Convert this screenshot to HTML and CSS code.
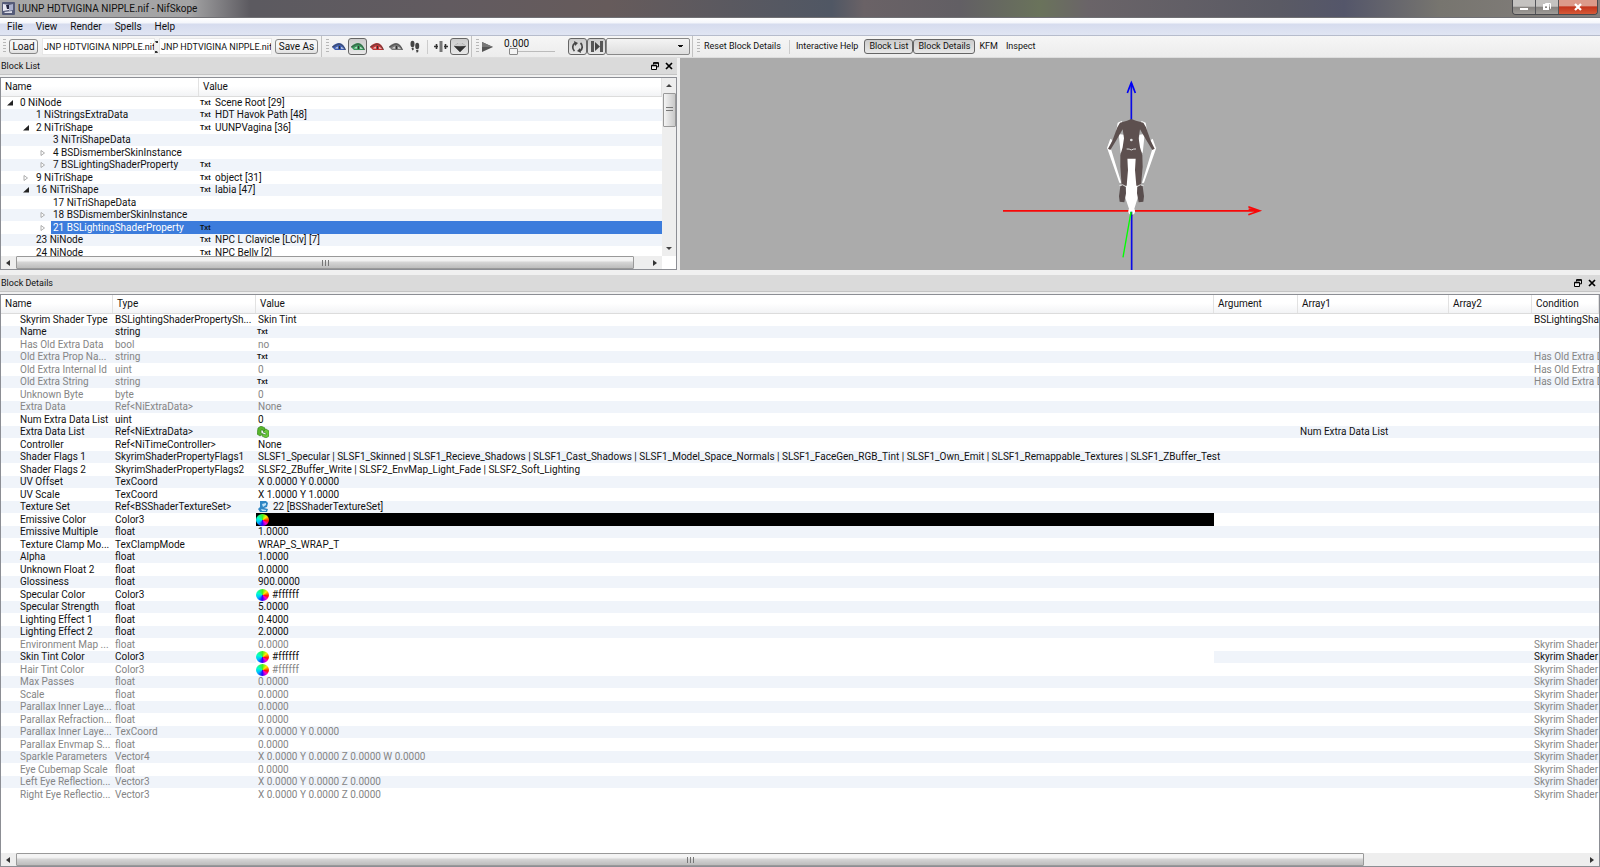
FILE: index.html
```
<!DOCTYPE html>
<html lang="en">
<head>
<meta charset="utf-8">
<title>UUNP HDTVIGINA NIPPLE.nif - NifSkope</title>
<link rel="stylesheet" href="styles.css">
</head>
<body>
<svg class="symbols" aria-hidden="true">
  <symbol id="eye" viewBox="0 0 14 8"><path d="M0 4C2 1 5 0 7 0c3 0 6 3 6.500 7H3z" fill="currentColor"/><path d="M3 5.500C5 2.500 9 2 12 6z" fill="#fff" opacity=".65"/><path d="M0 4c3-1 5-3 7-3s5 2 6.500 6" fill="none" stroke="#444" stroke-width=".8"/><path d="M6 2.500h3V7H6z" fill="currentColor"/><path d="M7 3h1v3H7z" fill="#333"/></symbol>
  <symbol id="float" viewBox="0 0 8 8"><path d="M2.500 2.500V.8h5v4H6" fill="none" stroke="#000" stroke-width="1"/><path d="M2.500 1h5" stroke="#000" stroke-width="1.600"/><path d="M.5 3.500h5v4h-5z" fill="#eee" stroke="#000"/><path d="M.5 3.500h5" stroke="#000" stroke-width="1.600"/></symbol>
  <symbol id="cross" viewBox="0 0 8 8"><path d="M1 1l6 6M7 1L1 7" stroke="#000" stroke-width="1.700"/></symbol>
  <symbol id="left" viewBox="0 0 4 6"><path d="M4 0v6L0 3z" fill="#333"/></symbol>
  <symbol id="right" viewBox="0 0 4 6"><path d="M0 0v6l4-3z" fill="#333"/></symbol>
  <symbol id="open" viewBox="0 0 6 6"><path d="M6 0v5.500H0z" fill="#222"/></symbol>
  <symbol id="closed" viewBox="0 0 6 6"><path d="M1 .5v5L4.500 3z" fill="#fff" stroke="#999" stroke-width=".8"/></symbol>
</svg>

<header class="titlebar">
  <svg class="appicon" viewBox="0 0 13 13"><rect width="13" height="13" rx="1" fill="#555b78"/><path d="M1 2l6 1v5L1 9z" fill="#e8e8f2"/><path d="M4 3h4v4H5z" fill="#242640"/><path d="M7 3l4-1v6l-4 1z" fill="#aab0cc"/><path d="M2 10l8-1v2H3z" fill="#dcdce8"/></svg>
  <h1 class="title">UUNP HDTVIGINA NIPPLE.nif - NifSkope</h1>
  <div class="winbuttons">
    <button class="win" aria-label="Minimize"><svg width="10" height="8" viewBox="0 0 10 8"><path d="M1 5h8v2H1z" fill="#fff"/></svg></button>
    <button class="win" aria-label="Restore"><svg width="10" height="8" viewBox="0 0 10 8"><path d="M3.500 1V.5h5v5H8" fill="none" stroke="#fff"/><path d="M2 2h4v4H2z" fill="none" stroke="#fff" stroke-width="2"/></svg></button>
    <button class="win win-close" aria-label="Close"><svg width="10" height="8" viewBox="0 0 10 8"><path d="M2 1l6 6M8 1L2 7" stroke="#fff" stroke-width="2.200"/></svg></button>
  </div>
</header>

<nav class="menubar">
  <button>File</button><button>View</button><button>Render</button><button>Spells</button><button>Help</button>
</nav>

<div class="toolbars">
  <div class="toolbar file-tools">
    <i class="grip"></i>
    <button class="push">Load</button>
    <input class="path" aria-label="Load file" value="JNP HDTVIGINA NIPPLE.nif">
    <svg class="swap" width="4" height="14" viewBox="0 0 4 14"><path d="M0 1h3v2H1zM0 11h2l1 2H0z" fill="#333"/></svg>
    <input class="path" aria-label="Save file" value="JNP HDTVIGINA NIPPLE.nif">
    <button class="push save">Save As</button>
  </div>
  <div class="toolbar view-tools">
    <i class="grip"></i>
    <button class="tool blue" aria-label="View top"><svg width="14" height="8"><use href="#eye"/></svg></button>
    <button class="tool green on" aria-label="View front"><svg width="14" height="8"><use href="#eye"/></svg></button>
    <button class="tool red" aria-label="View side"><svg width="14" height="8"><use href="#eye"/></svg></button>
    <button class="tool gray" aria-label="View user"><svg width="14" height="8"><use href="#eye"/></svg></button>
    <button class="tool" aria-label="Walk"><svg width="10" height="13" viewBox="0 0 10 13"><ellipse cx="2.500" cy="4" rx="2" ry="3.200" fill="#444"/><path d="M1.500 8l2-.4.3 2-1.500.8z" fill="#444"/><ellipse cx="7.200" cy="6" rx="2" ry="3.200" fill="#444"/><path d="M6 10l2.400-.3-.2 2.300-1.500.8z" fill="#444"/></svg></button>
    <i class="sep"></i>
    <button class="tool" aria-label="Flip"><svg width="14" height="11" viewBox="0 0 14 11"><path d="M5.500 0h3v11h-3z" fill="#777"/><path d="M0 5.500h4M10 5.500h4M2.500 3v5M11.500 3v5" stroke="#333" stroke-width="1.600"/></svg></button>
    <button class="tool on" aria-label="Perspective"><svg width="14" height="10" viewBox="0 0 14 10"><path d="M1 4l4-3h4l4 3-6 6z" fill="#555"/><path d="M1 4l4-3h4l4 3z" fill="#ccc"/><path d="M1 4l6 1 6-1-6 6z" fill="#333"/></svg></button>
  </div>
  <div class="toolbar anim-tools">
    <i class="grip"></i>
    <button class="tool play" aria-label="Play"><svg width="12" height="12" viewBox="0 0 12 12"><path d="M1 1l11 5L1 11z" fill="#555"/><path d="M1 1l11 5H1z" fill="#777"/></svg></button>
    <label class="time"><span>0.000</span><input type="range" min="0" max="100" value="0"></label>
    <button class="tool on" aria-label="Loop"><svg width="13" height="12" viewBox="0 0 13 12"><path d="M3.500 10A5 5 0 0 1 4 2M9.500 2a5 5 0 0 1-.5 8" fill="none" stroke="#444" stroke-width="1.700"/><path d="M3 0l4 2-3 3zM10 12l-4-2 3-3z" fill="#444"/></svg></button>
    <button class="tool on" aria-label="Switch animation"><svg width="12" height="11" viewBox="0 0 12 11"><path d="M0 0h3v11H0zM9 0h3v11H9z" fill="#555"/><path d="M4 1l5 4.500L4 10z" fill="#444"/></svg></button>
    <select class="anim" aria-label="Animation"><option></option></select>
  </div>
  <div class="toolbar window-tools">
    <i class="grip"></i>
    <button class="text">Reset Block Details</button>
    <i class="sep"></i>
    <button class="text">Interactive Help</button>
    <div class="toggles"><button class="text on">Block List</button><button class="text on">Block Details</button></div>
    <button class="text">KFM</button>
    <button class="text">Inspect</button>
  </div>
</div>

<div class="upper">
  <section class="dock">
    <div class="dock-title"><h2>Block List</h2><button aria-label="Float block list"><svg width="8" height="8"><use href="#float"/></svg></button><button aria-label="Close block list"><svg width="8" height="8"><use href="#cross"/></svg></button></div>
    <div class="frame tree-frame">
      <div class="tree-main">
        <div class="tree-area">
          <table class="grid tree">
            <colgroup><col class="c-tree"><col></colgroup>
            <thead><tr><th>Name</th><th>Value</th></tr></thead>
            <tbody>
              <tr><td class="l0"><svg><use href="#open"/></svg><span>0 NiNode</span></td><td><b>Txt</b>Scene Root [29]</td></tr>
              <tr><td class="l1"><span>1 NiStringsExtraData</span></td><td><b>Txt</b>HDT Havok Path [48]</td></tr>
              <tr><td class="l1"><svg><use href="#open"/></svg><span>2 NiTriShape</span></td><td><b>Txt</b>UUNPVagina [36]</td></tr>
              <tr><td class="l2"><span>3 NiTriShapeData</span></td><td></td></tr>
              <tr><td class="l2"><svg><use href="#closed"/></svg><span>4 BSDismemberSkinInstance</span></td><td></td></tr>
              <tr><td class="l2"><svg><use href="#closed"/></svg><span>7 BSLightingShaderProperty</span></td><td><b>Txt</b></td></tr>
              <tr><td class="l1"><svg><use href="#closed"/></svg><span>9 NiTriShape</span></td><td><b>Txt</b>object [31]</td></tr>
              <tr><td class="l1"><svg><use href="#open"/></svg><span>16 NiTriShape</span></td><td><b>Txt</b>labia [47]</td></tr>
              <tr><td class="l2"><span>17 NiTriShapeData</span></td><td></td></tr>
              <tr><td class="l2"><svg><use href="#closed"/></svg><span>18 BSDismemberSkinInstance</span></td><td></td></tr>
              <tr class="selected"><td class="l2"><svg><use href="#closed"/></svg><span>21 BSLightingShaderProperty</span></td><td><b>Txt</b></td></tr>
              <tr><td class="l1"><span>23 NiNode</span></td><td><b>Txt</b>NPC L Clavicle [LClv] [7]</td></tr>
              <tr><td class="l1"><span>24 NiNode</span></td><td><b>Txt</b>NPC Belly [2]</td></tr>
            </tbody>
          </table>
        </div>
        <div class="vscroll"><i class="up"></i><div class="vthumb"><i class="ticks"></i></div><i class="down"></i></div>
      </div>
      <div class="hscroll tree-scroll"><svg width="4" height="6"><use href="#left"/></svg><div class="track"><div class="thumb"><i class="ticks"></i></div></div><svg width="4" height="6"><use href="#right"/></svg></div>
    </div>
  </section>
  <main class="viewport">
    <svg viewBox="0 0 920 213" preserveAspectRatio="xMidYMin slice" aria-label="Model view">
      <g transform="translate(300 12) scale(.33333)">
        <path d="M454 150V40M455 425V606" stroke="#0a0ae6" stroke-width="5" fill="none"/>
        <path d="M442 69q6-16 12-31 6 15 12 31" fill="none" stroke="#0000f5" stroke-width="5"/>
        <path d="M69 422.500H838M805 410l34 12.500-34 12M806 417l28 6" stroke="#f80808" stroke-width="5" fill="none"/>
        <path d="M413 158l12-5 6 10-14 26-10 4zM497 158l-12-5-6 10 14 26 10 4zM381 233l12 4 31 102-6-1zM529 233l-12 4-31 102 6-1zM416 192l16 2 4 40-14 16zM494 192l-16 2-4 40 14 16zM442 264h26l4 80 2 37-12 38h-14l-13-38 4-37z" fill="#fff"/>
        <path d="M381 234l10-28 6 4-7 28zM528 234l-10-28-6 4 7 28z" fill="#fff"/>
        <path d="M441 152L454 147 468 152 490 158 498 172 512 212 524 236 517 240 500 212 480 178 476 205 480 232 487 256 488 290 483 347 469 347 465 300 467 266 442 266 444 300 440 347 425 347 421 290 421 256 428 232 432 205 428 178 408 212 391 240 384 236 397 212 412 172 420 158z" fill="#5d504f"/>
        <path d="M421 349l7-4 9 4 1 21-5 27-14-2-2-16zM488 349l-7-4-9 4-1 21 5 27 14-2 2-16z" fill="#594e4e"/>
        <path d="M418 347q10-7 20 3M471 350q10-10 20-3M440 237q8-1 14 3 7-4 14-3" fill="none" stroke="#ddd" stroke-width="3"/>
        <circle cx="454" cy="210" r="4" fill="#ddd"/>
        <circle cx="455" cy="424" r="10" fill="#fff"/>
        <path d="M454 425v12" stroke="#0a4a70" stroke-width="6"/>
        <path d="M453 426l-24 136" stroke="#0f0" stroke-width="4"/>
      </g>
    </svg>
  </main>
</div>

<section class="dock details-dock">
  <div class="dock-title"><h2>Block Details</h2><button aria-label="Float block details"><svg width="8" height="8"><use href="#float"/></svg></button><button aria-label="Close block details"><svg width="8" height="8"><use href="#cross"/></svg></button></div>
  <div class="frame">
    <div class="details-area">
      <table class="grid details">
        <colgroup><col class="c-name"><col class="c-type"><col><col class="c-arg"><col class="c-arr1"><col class="c-arr2"><col class="c-cond"></colgroup>
        <thead><tr><th>Name</th><th>Type</th><th>Value</th><th>Argument</th><th>Array1</th><th>Array2</th><th>Condition</th></tr></thead>
        <tbody>
          <tr><td>Skyrim Shader Type</td><td>BSLightingShaderPropertySh...</td><td>Skin Tint</td><td></td><td></td><td></td><td>BSLightingSha</td></tr>
          <tr><td>Name</td><td>string</td><td><b>Txt</b></td><td></td><td></td><td></td><td></td></tr>
          <tr class="off"><td>Has Old Extra Data</td><td>bool</td><td>no</td><td></td><td></td><td></td><td></td></tr>
          <tr class="off"><td>Old Extra Prop Na...</td><td>string</td><td><b>Txt</b></td><td></td><td></td><td></td><td>Has Old Extra D</td></tr>
          <tr class="off"><td>Old Extra Internal Id</td><td>uint</td><td>0</td><td></td><td></td><td></td><td>Has Old Extra D</td></tr>
          <tr class="off"><td>Old Extra String</td><td>string</td><td><b>Txt</b></td><td></td><td></td><td></td><td>Has Old Extra D</td></tr>
          <tr class="off"><td>Unknown Byte</td><td>byte</td><td>0</td><td></td><td></td><td></td><td></td></tr>
          <tr class="off"><td>Extra Data</td><td>Ref&lt;NiExtraData&gt;</td><td>None</td><td></td><td></td><td></td><td></td></tr>
          <tr><td>Num Extra Data List</td><td>uint</td><td>0</td><td></td><td></td><td></td><td></td></tr>
          <tr><td>Extra Data List</td><td>Ref&lt;NiExtraData&gt;</td><td><svg class="ico" viewBox="0 0 12 12"><path d="M1 2l3-2 4 2v3H6V4H4v3l2 1-3 2-3-2z" fill="#58b52c" stroke="#2f7d1c" stroke-width=".6"/><path d="M6 6l3-3 3 2v5l-3 2-4-2 1-2 3 1V7z" fill="#6cc83c" stroke="#2f7d1c" stroke-width=".6"/></svg></td><td></td><td>Num Extra Data List</td><td></td><td></td></tr>
          <tr><td>Controller</td><td>Ref&lt;NiTimeController&gt;</td><td>None</td><td></td><td></td><td></td><td></td></tr>
          <tr><td>Shader Flags 1</td><td>SkyrimShaderPropertyFlags1</td><td>SLSF1_Specular | SLSF1_Skinned | SLSF1_Recieve_Shadows | SLSF1_Cast_Shadows | SLSF1_Model_Space_Normals | SLSF1_FaceGen_RGB_Tint | SLSF1_Own_Emit | SLSF1_Remappable_Textures | SLSF1_ZBuffer_Test</td><td></td><td></td><td></td><td></td></tr>
          <tr><td>Shader Flags 2</td><td>SkyrimShaderPropertyFlags2</td><td>SLSF2_ZBuffer_Write | SLSF2_EnvMap_Light_Fade | SLSF2_Soft_Lighting</td><td></td><td></td><td></td><td></td></tr>
          <tr><td>UV Offset</td><td>TexCoord</td><td>X 0.0000 Y 0.0000</td><td></td><td></td><td></td><td></td></tr>
          <tr><td>UV Scale</td><td>TexCoord</td><td>X 1.0000 Y 1.0000</td><td></td><td></td><td></td><td></td></tr>
          <tr><td>Texture Set</td><td>Ref&lt;BSShaderTextureSet&gt;</td><td><svg class="ico" viewBox="0 0 12 12"><path d="M3 0h6l2 2-1 4-3 1 4 1-1 3H3L1 8l2-2z" fill="#2f86c4"/><path d="M5 3l4-1v2L6 6zM4 8l5 1v1H5z" fill="#bfe2f7"/></svg>22 [BSShaderTextureSet]</td><td></td><td></td><td></td><td></td></tr>
          <tr><td>Emissive Color</td><td>Color3</td><td class="black"><i class="wheel"></i></td><td></td><td></td><td></td><td></td></tr>
          <tr><td>Emissive Multiple</td><td>float</td><td>1.0000</td><td></td><td></td><td></td><td></td></tr>
          <tr><td>Texture Clamp Mo...</td><td>TexClampMode</td><td>WRAP_S_WRAP_T</td><td></td><td></td><td></td><td></td></tr>
          <tr><td>Alpha</td><td>float</td><td>1.0000</td><td></td><td></td><td></td><td></td></tr>
          <tr><td>Unknown Float 2</td><td>float</td><td>0.0000</td><td></td><td></td><td></td><td></td></tr>
          <tr><td>Glossiness</td><td>float</td><td>900.0000</td><td></td><td></td><td></td><td></td></tr>
          <tr><td>Specular Color</td><td>Color3</td><td><i class="wheel"></i>#ffffff</td><td></td><td></td><td></td><td></td></tr>
          <tr><td>Specular Strength</td><td>float</td><td>5.0000</td><td></td><td></td><td></td><td></td></tr>
          <tr><td>Lighting Effect 1</td><td>float</td><td>0.4000</td><td></td><td></td><td></td><td></td></tr>
          <tr><td>Lighting Effect 2</td><td>float</td><td>2.0000</td><td></td><td></td><td></td><td></td></tr>
          <tr class="off"><td>Environment Map ...</td><td>float</td><td>0.0000</td><td></td><td></td><td></td><td>Skyrim Shader</td></tr>
          <tr><td>Skin Tint Color</td><td>Color3</td><td class="white"><i class="wheel"></i>#ffffff</td><td></td><td></td><td></td><td>Skyrim Shader</td></tr>
          <tr class="off"><td>Hair Tint Color</td><td>Color3</td><td><i class="wheel"></i>#ffffff</td><td></td><td></td><td></td><td>Skyrim Shader</td></tr>
          <tr class="off"><td>Max Passes</td><td>float</td><td>0.0000</td><td></td><td></td><td></td><td>Skyrim Shader</td></tr>
          <tr class="off"><td>Scale</td><td>float</td><td>0.0000</td><td></td><td></td><td></td><td>Skyrim Shader</td></tr>
          <tr class="off"><td>Parallax Inner Laye...</td><td>float</td><td>0.0000</td><td></td><td></td><td></td><td>Skyrim Shader</td></tr>
          <tr class="off"><td>Parallax Refraction...</td><td>float</td><td>0.0000</td><td></td><td></td><td></td><td>Skyrim Shader</td></tr>
          <tr class="off"><td>Parallax Inner Laye...</td><td>TexCoord</td><td>X 0.0000 Y 0.0000</td><td></td><td></td><td></td><td>Skyrim Shader</td></tr>
          <tr class="off"><td>Parallax Envmap S...</td><td>float</td><td>0.0000</td><td></td><td></td><td></td><td>Skyrim Shader</td></tr>
          <tr class="off"><td>Sparkle Parameters</td><td>Vector4</td><td>X 0.0000 Y 0.0000 Z 0.0000 W 0.0000</td><td></td><td></td><td></td><td>Skyrim Shader</td></tr>
          <tr class="off"><td>Eye Cubemap Scale</td><td>float</td><td>0.0000</td><td></td><td></td><td></td><td>Skyrim Shader</td></tr>
          <tr class="off"><td>Left Eye Reflection...</td><td>Vector3</td><td>X 0.0000 Y 0.0000 Z 0.0000</td><td></td><td></td><td></td><td>Skyrim Shader</td></tr>
          <tr class="off"><td>Right Eye Reflectio...</td><td>Vector3</td><td>X 0.0000 Y 0.0000 Z 0.0000</td><td></td><td></td><td></td><td>Skyrim Shader</td></tr>
        </tbody>
      </table>
    </div>
    <div class="hscroll details-scroll"><svg width="4" height="6"><use href="#left"/></svg><div class="track"><div class="thumb"><i class="ticks"></i></div></div><svg width="4" height="6"><use href="#right"/></svg></div>
  </div>
</section>
</body>
</html>
```
FILE: styles.css
```
* { box-sizing: border-box; }
body {
  margin: 0;
  min-height: 100vh;
  display: flex;
  flex-direction: column;
  background: #f0f0f0;
  color: #111;
  font: 10px/12px Roboto, "Open Sans", sans-serif;
}
button, input, select { font: inherit; color: inherit; margin: 0; padding: 0; border: 0; background: none; }
h1, h2 { margin: 0; font: inherit; }
svg { flex: none; }
.symbols { position: absolute; width: 0; height: 0; }

.titlebar {
  display: flex;
  align-items: center;
  height: 18px;
  padding-left: 2px;
  gap: 3px;
  border-bottom: 1px solid #707074;
  background:
    linear-gradient(90deg, #a8a8a8 0, #a3a3a4 190px, transparent 250px),
    linear-gradient(90deg, #5c5a60 16%, #625b60 28%, #665b5b 38%, #505764 52%, #6a6266 54%, #625f64 60%, #6a735b 65%, #6a6468 68%, #5a5a64 80%, #54566a 84%, #77756f 90%, #85807e 100%);
}
.appicon { width: 13px; height: 13px; }
.title { color: #111; flex: 1; }
.winbuttons { display: flex; align-self: flex-start; margin-right: 2px; height: 15px; border: 1px solid #4a4a4e; border-top: 0; border-radius: 0 0 4px 4px; overflow: hidden; }
.win { width: 23px; display: flex; align-items: center; justify-content: center; border-right: 1px solid #55565a; background: linear-gradient(#c4c2c0 45%, #85827f 50%, #a09c98); }
.win-close { width: 38px; border-right: 0; background: linear-gradient(#dc9a8a 40%, #c4341c 50%, #d65a38); }

.menubar {
  display: flex;
  gap: 13px;
  height: 18px;
  padding-left: 7px;
  border-bottom: 1px solid #b6bccc;
  background: linear-gradient(#fff 0, #f4f6fb 5px, #d6dcee 6px, #e0e5f3);
}

.toolbars { display: flex; height: 22px; background: linear-gradient(#f6f6f6, #ececec); border-bottom: 1px solid #ddd; }
.toolbar { display: flex; align-items: center; padding-left: 4px; border-right: 1px solid #c2c2c2; }
.grip { width: 3px; height: 15px; flex: none; background: repeating-linear-gradient(#b8b8b8 0 1px, transparent 1px 3px); }
.sep { width: 1px; height: 14px; background: #ccc; }
.file-tools { width: 322px; padding-left: 3px; }
.view-tools { width: 150px; }
.anim-tools { width: 221px; }
.window-tools { flex: 1; border-right: 0; font-size: 9px; }
.push { height: 15px; width: 29px; margin: 0 4px 0 3px; border: 1px solid #888; border-radius: 3px; background: linear-gradient(#f6f6f6 50%, #e0e0e0); line-height: 12px; flex: none; }
.push.save { width: 43px; margin: 0 0 0 3px; }
.path { height: 17px; width: 113px; padding-left: 1px; border: 1px solid #e6e6e6; background: #fff; font-size: 9px; }
.swap { margin: 0; }
.tool { width: 19px; height: 17px; display: flex; align-items: center; justify-content: center; flex: none; }
.on { border: 1px solid #666; border-radius: 3px; background: linear-gradient(#ccc, #e8e8e8); }
.blue { color: #3d5cae; }
.green { color: #36975a; }
.red { color: #c03434; }
.gray { color: #777; }
.view-tools .sep { margin: 0 3px; }
.play { width: 15px; }
.time { display: flex; flex-direction: column; width: 74px; padding-left: 10px; line-height: 9px; }
.time input { -webkit-appearance: none; appearance: none; width: 46px; height: 7px; margin-left: 5px; background: linear-gradient(#bbb, #bbb) 0 3px / 100% 1px no-repeat; }
.time input::-webkit-slider-thumb { -webkit-appearance: none; width: 9px; height: 7px; border: 1px solid #888; border-radius: 1px; background: #f4f4f4; }
.anim {
  flex: 1;
  height: 17px;
  margin-right: 2px;
  appearance: none;
  border: 1px solid #888;
  border-radius: 2px;
  background: linear-gradient(135deg, #111 50%, transparent 50%) calc(100% - 5px) 6px / 3px 3px no-repeat, linear-gradient(225deg, #111 50%, transparent 50%) calc(100% - 8px) 6px / 3px 3px no-repeat, linear-gradient(#f4f4f4, #dedede);
}
.text { padding: 0 4px; height: 15px; line-height: 13px; }
.toggles { display: flex; margin-left: 2px; }
.window-tools .sep { margin: 0 2px 0 4px; }

.upper { display: grid; grid-template-columns: 42.5% 1fr; grid-template-rows: minmax(0, 1fr); height: 212px; }
.dock { display: flex; flex-direction: column; min-width: 0; padding-right: 3px; }
.dock-title { display: flex; align-items: center; gap: 6px; height: 17px; padding: 0 4px 0 1px; background: #dadada; border: solid #c4c4c4; border-width: 0 0 1px; font-size: 9px; }
.dock-title h2 { flex: 1; }
.dock-title button { width: 8px; height: 8px; display: flex; }
.frame { flex: 1; display: flex; flex-direction: column; min-height: 0; margin-top: 2px; border: 1px solid #8c8e94; background: #fff; }
.viewport { background: #ababab; overflow: hidden; }
.viewport svg { display: block; width: 100%; height: 100%; }

.grid { width: 100%; table-layout: fixed; border-collapse: collapse; }
.grid th { height: 18px; padding: 0 0 0 4px; text-align: left; font-weight: 400; border: solid #dcdcdc; border-width: 0 0 1px; background: linear-gradient(270deg, #e2e2e2 1px, transparent 1px), linear-gradient(#fff 45%, #f2f3f5); }
.grid td { height: 13px; padding: 0 0 0 2px; line-height: 12px; white-space: nowrap; }
.grid tbody tr:nth-child(even) td { height: 12px; }
.grid tbody tr:nth-child(even) { background: #f0f4fa; }
.grid b { display: inline-block; width: 15px; margin-left: -1px; font: bold 7px/12px "Liberation Sans", sans-serif; vertical-align: top; color: #111; }

.tree-main { display: flex; flex: 1; min-height: 0; }
.tree-area { flex: 1; overflow: hidden; }
.c-tree { width: 198px; }
.tree td span { display: inline-block; height: 12px; vertical-align: top; }
.tree td svg { float: left; width: 6px; height: 6px; margin: 3px 0 0 -13px; }
.tree .l0 { padding-left: 19px; }
.tree .l1 { padding-left: 35px; }
.tree .l2 { padding-left: 52px; }
.selected { background: linear-gradient(90deg, #fff 50px, #3c7cdc 50px); color: #fff; }
.vscroll { width: 14px; display: flex; flex-direction: column; align-items: center; background: #eee; }
.up, .down { margin: 6px 0; border: 3px solid transparent; border-top-width: 0; border-bottom-color: #444; }
.down { margin-top: auto; border-width: 3px 3px 0; border-top-color: #444; }
.vthumb { width: 13px; height: 34px; display: flex; align-items: center; justify-content: center; border: 1px solid #999; border-radius: 1px; background: linear-gradient(90deg, #f4f4f4, #c8c8c8); }
.ticks { width: 7px; height: 6px; background: repeating-linear-gradient(90deg, #777 0 1px, transparent 1px 3px); }
.vthumb .ticks { background: repeating-linear-gradient(#777 0 1px, transparent 1px 3px); }
.hscroll { display: flex; flex: none; align-items: center; gap: 6px; height: 13px; padding: 0 5px; background: #eee; }
.track { flex: 1; display: flex; height: 13px; }
.thumb { display: flex; align-items: center; justify-content: center; border: 1px solid #999; border-radius: 1px; background: linear-gradient(#f4f4f4 30%, #d4d4d4 50%, #bcbcbc); }
.tree-scroll { margin-right: 14px; }
.tree-scroll .thumb { width: 98%; }
.details-scroll .thumb { width: 86%; }

.details-dock { flex: 1; padding: 5px 0 0; }
.details-area { flex: 1; min-height: 0; overflow: hidden; }
.c-name { width: 112px; }
.c-type { width: 143px; }
.c-arg { width: 84px; }
.c-arr1 { width: 151px; }
.c-arr2 { width: 83px; }
.c-cond { width: 67px; }
.details td:first-child { padding-left: 19px; }
.details td:last-child { padding-left: 2px; overflow: hidden; }
.off { color: #858585; }
.black { background: #000; }
.white { background: #fff; }
.ico, .wheel { display: inline-block; width: 12px; height: 12px; margin: 0 4px 0 -1px; vertical-align: top; }
.wheel { width: 13px; margin: 0 3px 0 -2px; border-radius: 50%; background: conic-gradient(#4e2, #fe0 50deg, #f10 100deg, #f0c 135deg, #20f 185deg, #0bf 240deg, #0fc 290deg, #4e2); }
```
